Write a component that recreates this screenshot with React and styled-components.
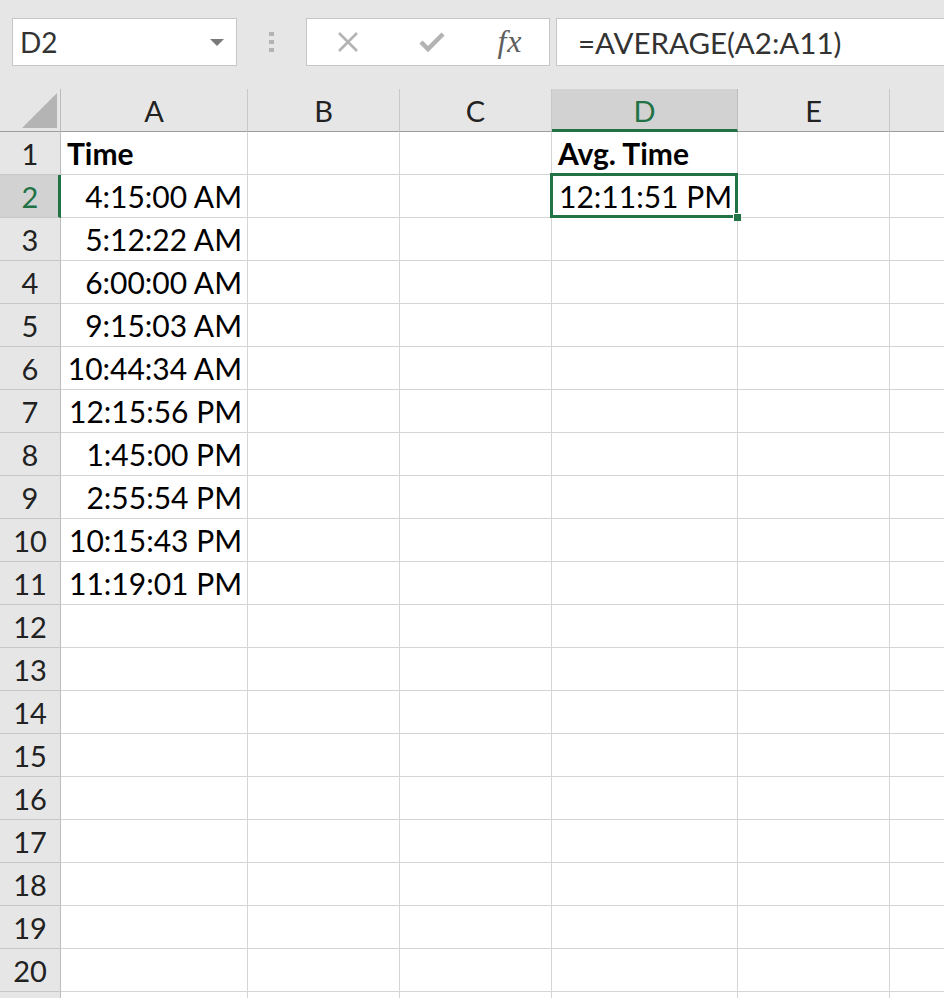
import React from 'react';
import styled, { createGlobalStyle } from 'styled-components';

const green = '#217346';

const GlobalStyle = createGlobalStyle`
  html, body {
    margin: 0;
    padding: 0;
    background: #ffffff;
    overflow: hidden;
  }
  body {
    font-family: Lato, "Open Sans", sans-serif;
  }
`;

const Page = styled.div`
  width: 944px;
  height: 998px;
  overflow: hidden;
  background: #ffffff;
`;

const Toolbar = styled.div`
  height: 89px;
  box-sizing: border-box;
  padding: 18px 0 0 12px;
  background: #e6e6e6;
  display: flex;
  align-items: flex-start;
`;

const NameBox = styled.div`
  width: 225px;
  height: 48px;
  box-sizing: border-box;
  background: #ffffff;
  border: 1px solid #c6c6c6;
  display: flex;
  align-items: center;
  justify-content: space-between;
  padding: 0 12px 0 7px;
  font-size: 28px;
  color: #333333;
`;

const Arrow = styled.span`
  width: 0;
  height: 0;
  border-left: 7px solid transparent;
  border-right: 7px solid transparent;
  border-top: 7px solid #7a7a7a;
`;

const Grip = styled.div`
  width: 69px;
  height: 48px;
  display: flex;
  flex-direction: column;
  align-items: center;
  justify-content: center;
  gap: 4px;

  span {
    width: 5px;
    height: 4px;
    background: #b4b4b4;
  }
`;

const IconBox = styled.div`
  width: 244px;
  height: 48px;
  box-sizing: border-box;
  background: #ffffff;
  border: 1px solid #c6c6c6;
  display: flex;
  align-items: center;
  padding: 0 0 0 28px;
`;

const IconSlot = styled.div`
  width: ${(p) => p.$w}px;
  display: flex;
  align-items: center;
  justify-content: center;
`;

const Fx = styled.span`
  font-family: "Liberation Serif", serif;
  font-style: italic;
  font-size: 32px;
  color: #5e5e5e;
  letter-spacing: 1px;
  margin-top: -2px;
`;

const FormulaInput = styled.div`
  flex: 1;
  height: 48px;
  margin-left: 6px;
  box-sizing: border-box;
  background: #ffffff;
  border: 1px solid #c6c6c6;
  border-right: none;
  display: flex;
  align-items: center;
  padding-left: 21px;
  font-size: 29.5px;
  color: #333333;
`;

const Sheet = styled.div`
  display: grid;
  grid-template-columns: 61px 187px 152px 152px 186px 152px 152px;
  grid-auto-rows: 43px;
`;

const Corner = styled.div`
  box-sizing: border-box;
  background: #e6e6e6;
  border-right: 1px solid #bdbdbd;
  border-bottom: 1px solid #9e9e9e;
  display: flex;
  align-items: flex-end;
  justify-content: flex-end;
  padding: 0 3px 3px 0;
`;

const Triangle = styled.span`
  width: 0;
  height: 0;
  border-left: 35px solid transparent;
  border-bottom: 35px solid #b4b4b4;
`;

const ColHead = styled.div`
  box-sizing: border-box;
  background: ${(p) => (p.$active ? '#d2d2d2' : '#e6e6e6')};
  color: ${(p) => (p.$active ? green : '#222222')};
  border-right: 1px solid ${(p) => (p.$active ? '#bdbdbd' : '#c8c8c8')};
  border-bottom: ${(p) => (p.$active ? `3px solid ${green}` : '1px solid #9e9e9e')};
  display: flex;
  align-items: center;
  justify-content: center;
  font-size: 29px;
  padding-top: ${(p) => (p.$active ? '2px' : '0')};
`;

const RowHead = styled.div`
  box-sizing: border-box;
  background: ${(p) => (p.$active ? '#d2d2d2' : '#e6e6e6')};
  color: ${(p) => (p.$active ? green : '#222222')};
  border-right: ${(p) => (p.$active ? `3px solid ${green}` : '1px solid #bdbdbd')};
  border-bottom: 1px solid #c8c8c8;
  display: flex;
  align-items: center;
  justify-content: center;
  font-size: 29px;
  padding-left: ${(p) => (p.$active ? '2px' : '0')};
`;

const Cell = styled.div`
  position: relative;
  box-sizing: border-box;
  border-right: 1px solid #d4d4d4;
  border-bottom: 1px solid #d4d4d4;
  display: flex;
  align-items: center;
  justify-content: ${(p) => (p.$right ? 'flex-end' : 'flex-start')};
  padding: 0 5px 0 6px;
  font-size: 30px;
  font-weight: ${(p) => (p.$bold ? 700 : 400)};
  color: #000000;
  white-space: nowrap;
`;

const Selection = styled.div`
  position: absolute;
  z-index: 3;
  left: -2px;
  top: -2px;
  right: -1px;
  bottom: -1px;
  border: 3px solid ${green};
  pointer-events: none;

  &::after {
    content: '';
    position: absolute;
    right: -6px;
    bottom: -6px;
    width: 7px;
    height: 7px;
    background: ${green};
    border-left: 1px solid #ffffff;
    border-top: 1px solid #ffffff;
  }
`;

const columns = ['A', 'B', 'C', 'D', 'E', ''];

const times = [
  '4:15:00 AM',
  '5:12:22 AM',
  '6:00:00 AM',
  '9:15:03 AM',
  '10:44:34 AM',
  '12:15:56 PM',
  '1:45:00 PM',
  '2:55:54 PM',
  '10:15:43 PM',
  '11:19:01 PM',
];

const cellValue = (row, col) => {
  if (col === 0) {
    if (row === 1) return { text: 'Time', bold: true };
    if (row >= 2 && row <= 11) return { text: times[row - 2], right: true };
  }
  if (col === 3) {
    if (row === 1) return { text: 'Avg. Time', bold: true };
    if (row === 2) return { text: '12:11:51 PM', right: true, selected: true };
  }
  return { text: '' };
};

const XIcon = () => (
  <svg width="24" height="24" viewBox="0 0 24 24">
    <path d="M3 3 L21 21 M21 3 L3 21" stroke="#b3b3b3" strokeWidth="2.6" fill="none" />
  </svg>
);

const CheckIcon = () => (
  <svg width="26" height="22" viewBox="0 0 26 22">
    <path d="M2 11 L9 18 L24 3" stroke="#b3b3b3" strokeWidth="4.5" fill="none" />
  </svg>
);

export default function App() {
  // one extra row so the grid runs to the bottom edge like the reference
  const rows = Array.from({ length: 21 }, (_, i) => i + 1);
  return (
    <Page>
      <GlobalStyle />
      <Toolbar>
        <NameBox>
          D2
          <Arrow />
        </NameBox>
        <Grip>
          <span />
          <span />
          <span />
        </Grip>
        <IconBox>
          <IconSlot $w={26}>
            <XIcon />
          </IconSlot>
          <IconSlot $w={56} />
          <IconSlot $w={30}>
            <CheckIcon />
          </IconSlot>
          <IconSlot $w={48} />
          <IconSlot $w={30}>
            <Fx>fx</Fx>
          </IconSlot>
        </IconBox>
        <FormulaInput>=AVERAGE(A2:A11)</FormulaInput>
      </Toolbar>
      <Sheet>
        <Corner>
          <Triangle />
        </Corner>
        {columns.map((c, i) => (
          <ColHead key={i} $active={c === 'D'}>
            {c}
          </ColHead>
        ))}
        {rows.map((r) => (
          <React.Fragment key={r}>
            <RowHead $active={r === 2}>{r <= 20 ? r : ''}</RowHead>
            {columns.map((_, ci) => {
              const v = cellValue(r, ci);
              return (
                <Cell key={ci} $right={v.right} $bold={v.bold}>
                  {v.text}
                  {v.selected && <Selection />}
                </Cell>
              );
            })}
          </React.Fragment>
        ))}
      </Sheet>
    </Page>
  );
}
